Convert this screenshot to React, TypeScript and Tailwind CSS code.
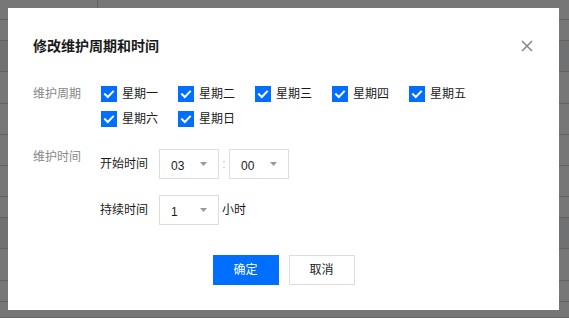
import React from "react";

const days1 = ["星期一", "星期二", "星期三", "星期四", "星期五"];
const days2 = ["星期六", "星期日"];

function Check({ label }: { label: string }) {
  return (
    <div className="flex items-center gap-[5px] h-[16px] w-[77px]">
      <span className="w-[16px] h-[16px] bg-[#006eff] flex items-center justify-center shrink-0">
        <svg width="16" height="16" viewBox="0 0 16 16" fill="none">
          <path d="M4 8.2 L6.8 11 L12 5.6" stroke="#fff" strokeWidth="2" strokeLinecap="square" />
        </svg>
      </span>
      <span className="text-[12px] leading-[16px] text-[#1a1a1a]">{label}</span>
    </div>
  );
}

function Select({ value }: { value: string }) {
  return (
    <div className="w-[60px] h-[30px] border border-[#dddddd] bg-white flex items-center justify-between pl-[11px] pr-[11px]">
      <span className="text-[12px] text-[#1a1a1a] leading-[16px] pt-[3px]">{value}</span>
      <svg width="7" height="4" viewBox="0 0 7 4">
        <path d="M0 0 L7 0 L3.5 4 Z" fill="#999999" />
      </svg>
    </div>
  );
}

const rows = [
  { h: "h-[20px]", dark: false, first: true },
  { h: "h-[21px]", dark: false },
  { h: "h-[31px]", dark: true },
  { h: "h-[32px]", dark: false },
  { h: "h-[31px]", dark: false },
  { h: "h-[31px]", dark: false },
  { h: "h-[31px]", dark: false },
  { h: "h-[21px]", dark: false },
  { h: "h-[31px]", dark: true },
  { h: "h-[32px]", dark: false },
  { h: "h-[21px]", dark: false },
  { h: "h-[16px]", dark: false },
];

export default function App() {
  return (
    <div className="relative w-[569px] h-[318px] overflow-hidden bg-[#777777] font-['Liberation_Sans','Noto_Sans_CJK_SC',sans-serif]">
      <div className="flex flex-col">
        {rows.map((r, i) => (
          <div
            key={i}
            className={`${r.h} box-border border-b border-[#626262] ${r.dark ? "bg-[#707173]" : "bg-[#777777]"} flex`}
          >
            {r.first ? <div className="w-[98px] h-full border-r border-[#626262]" /> : null}
          </div>
        ))}
      </div>

      <div className="absolute left-[8px] top-[8px] w-[551px] h-[302px] bg-white pt-[28px] px-[25px] flex flex-col">
        <div className="flex items-center justify-between h-[20px]">
          <span className="text-[14px] font-bold leading-[20px] text-[#1a1a1a]">修改维护周期和时间</span>
          <svg width="12" height="12" viewBox="0 0 12 12" className="mr-[1px]">
            <path d="M1 1 L11 11 M11 1 L1 11" stroke="#888888" strokeWidth="1.6" />
          </svg>
        </div>

        <div className="mt-[30px] flex">
          <div className="w-[68px] text-[12px] leading-[16px] text-[#888888]">维护周期</div>
          <div className="flex flex-col gap-[9px]">
            <div className="flex">
              {days1.map((d) => (
                <Check key={d} label={d} />
              ))}
            </div>
            <div className="flex">
              {days2.map((d) => (
                <Check key={d} label={d} />
              ))}
            </div>
          </div>
        </div>

        <div className="mt-[22px] flex">
          <div className="w-[67px] text-[12px] leading-[16px] text-[#888888]">维护时间</div>
          <div className="flex flex-col gap-[16px]">
            <div className="flex items-center h-[30px]">
              <span className="w-[59px] text-[12px] text-[#1a1a1a]">开始时间</span>
              <Select value="03" />
              <span className="w-[10px] text-center text-[12px] text-[#bbbbbb]">:</span>
              <Select value="00" />
            </div>
            <div className="flex items-center h-[30px]">
              <span className="w-[59px] text-[12px] text-[#1a1a1a]">持续时间</span>
              <Select value="1" />
              <span className="ml-[3px] text-[12px] text-[#1a1a1a]">小时</span>
            </div>
          </div>
        </div>

        <div className="mt-[30px] flex justify-center gap-[10px]">
          <button className="w-[66px] h-[30px] bg-[#006eff] text-white text-[12px]">确定</button>
          <button className="w-[66px] h-[30px] bg-white border border-[#dddddd] text-[#1a1a1a] text-[12px]">取消</button>
        </div>
      </div>
    </div>
  );
}
